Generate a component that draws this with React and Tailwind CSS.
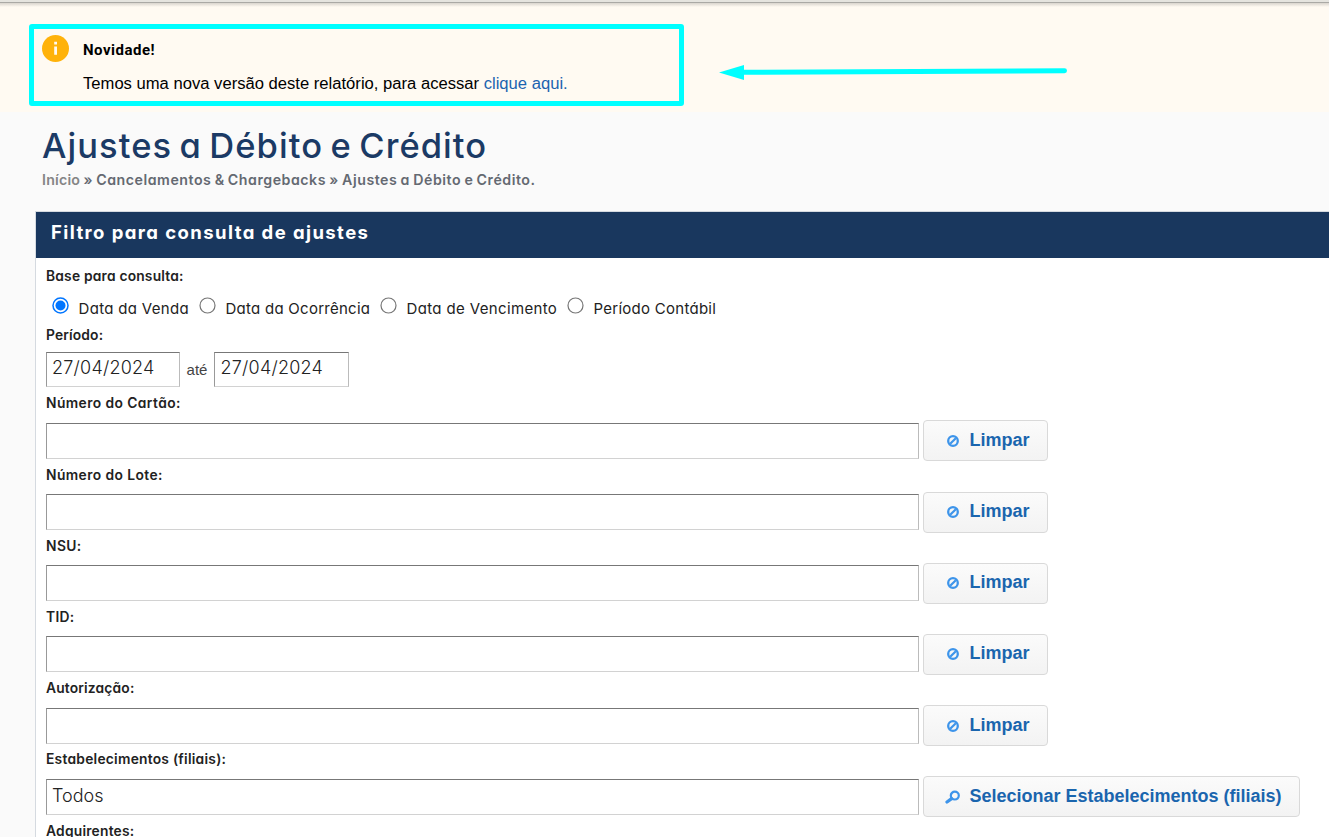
const geo = "font-['Inter'] [font-feature-settings:'cv11']";

const bases = [
  { label: 'Data da Venda', checked: true, box: 'w-[147px]', text: 'tracking-[0.32px]' },
  { label: 'Data da Ocorrência', box: 'w-[181px]', text: 'tracking-[0.26px]' },
  { label: 'Data de Vencimento', box: 'w-[187px]', text: 'tracking-[0.36px]' },
  { label: 'Período Contábil', box: 'w-[160px]', text: 'tracking-[0.27px]' },
];

const fields = [
  { label: 'Número do Cartão:', text: 'tracking-[0.42px]' },
  { label: 'Número do Lote:', text: 'tracking-[0.42px]' },
  { label: 'NSU:', text: 'tracking-[0.4px]' },
  { label: 'TID:', text: 'tracking-[0.3px]' },
  { label: 'Autorização:', text: 'tracking-[0.17px]' },
  { label: 'Estabelecimentos (filiais):', text: 'tracking-[0.25px]', value: 'Todos', search: true },
];

function ClearIcon() {
  return (
    <svg width="12" height="12" viewBox="0 0 12 12" fill="none" stroke="#3d94ea">
      <circle cx="6" cy="6" r="4.8" strokeWidth="2.3" />
      <path d="M3.2 8.8 8.8 3.2" strokeWidth="2.2" />
    </svg>
  );
}

function SearchIcon() {
  return (
    <svg width="15" height="14" viewBox="0 0 15 14" fill="none" stroke="#3d94ea">
      <ellipse cx="9.8" cy="5.6" rx="4" ry="3.9" strokeWidth="2.2" />
      <path d="M6.6 8.6 2 12" strokeWidth="3.2" strokeLinecap="round" />
    </svg>
  );
}

function Button({ search }) {
  return (
    <button
      className={`flex h-[41px] items-center rounded-[4px] border border-[#d9d9d9] bg-linear-to-b from-[#fbfbfb] to-[#f3f3f3] pb-px font-['Liberation_Sans',Arial,sans-serif] text-[18px] font-bold whitespace-nowrap text-[#1a65ae] ${
        search ? 'w-[377px] pl-[21px]' : 'w-[125px] pl-[23px]'
      }`}
    >
      <span className={`flex shrink-0 ${search ? 'w-[24.5px] pt-[2px]' : 'w-[22.5px] pt-px'}`}>
        {search ? <SearchIcon /> : <ClearIcon />}
      </span>
      {search ? 'Selecionar Estabelecimentos (filiais)' : 'Limpar'}
    </button>
  );
}

const inputBorder = 'border border-t-[#777] border-r-[#bbb] border-b-[#d2d2d2] border-l-[#999] bg-white outline-none';

function Label({ children, className = '' }) {
  return <div className={`text-[13.8px] leading-[22px] font-semibold text-[#222] ${className}`}>{children}</div>;
}

export default function App() {
  return (
    <div className={`h-[837px] w-full overflow-hidden bg-[#fafafa] ${geo}`}>
      <div className="relative h-[112px] bg-[#fffaf2]">
        <div className="h-[3px] border-b border-[#aaa9a5] bg-[#e5e4df]" />
        <div className="h-[4px] bg-linear-to-b from-[#d9d5ce] to-[#fffaf2]" />
        <div className="mt-[17px] ml-[29px] flex h-[82px] w-[655px] rounded-[3px] border-[5px] border-[#00ffff] pl-[8px]">
          <svg className="mt-[6px] shrink-0" width="27" height="27" viewBox="0 0 27 27">
            <circle cx="13.5" cy="13.5" r="13.5" fill="#ffb20a" />
            <path d="M12.2 6.8h2.8v2.7h-2.8zM12.2 11.6h2.8v8.2h-2.8z" fill="#fffaf2" />
          </svg>
          <div className="ml-[14px] whitespace-nowrap text-black">
            <div className="mt-[11px] font-['Roboto'] text-[15px] leading-[20px] font-bold tracking-[0.5px]">Novidade!</div>
            <div className="mt-[14px] font-['Liberation_Sans',Arial,sans-serif] text-[16.62px] leading-[20px]">
              Temos uma nova versão deste relatório, para acessar <a className="text-[#1c63b0]">clique aqui.</a>
            </div>
          </div>
        </div>
        <svg className="absolute top-[60px] left-[716px]" width="356" height="24" viewBox="0 0 356 24">
          <path d="M26 12.3 348.5 10.7" stroke="#00ffff" strokeWidth="5" strokeLinecap="round" />
          <path d="M3 12.4 28 5v15z" fill="#00ffff" />
        </svg>
      </div>

      <header className="h-[99px] pl-[42px] whitespace-nowrap">
        <h1 className="pt-[12px] text-[34.5px] leading-[44px] font-medium tracking-[1.05px] text-[#1b3a65] [word-spacing:-2.8px]">Ajustes a Débito e Crédito</h1>
        <p className="mt-[2px] text-[14.2px] leading-[20px] font-semibold tracking-[0.52px] text-[#646971] [word-spacing:-0.8px]">
          <span className="tracking-[0.2px] text-[#858585]">Início</span> » Cancelamentos &amp; Chargebacks » Ajustes a Débito e Crédito.
        </p>
      </header>

      <main className="ml-[35px] h-[640px] border-t border-l border-[#d5dae0] bg-white">
        <h2 className="h-[46px] bg-[#19375e] pt-[7px] pl-[15px] text-[18.5px] leading-[26px] font-bold tracking-[1.42px] whitespace-nowrap text-white">
          Filtro para consulta de ajustes
        </h2>
        <div className="pl-[10px] whitespace-nowrap">
          <Label className="mt-[7px] tracking-[0.2px]">Base para consulta:</Label>
          <div className="mt-[8px] flex h-[24px] pl-[6px]">
            {bases.map((b) => (
              <label key={b.label} className={`flex shrink-0 ${b.box}`}>
                <svg className="mt-[2px] mr-[9.5px] shrink-0" width="17" height="17" viewBox="0 0 17 17" fill="none">
                  <circle cx="8.5" cy="8.5" r="7.5" stroke={b.checked ? '#0075ff' : '#767676'} strokeWidth={b.checked ? 1.5 : 1.2} />
                  {b.checked && <circle cx="8.5" cy="8.5" r="5" fill="#0075ff" />}
                </svg>
                <span className={`pt-[3px] text-[15px] leading-[22px] text-[#222] ${b.text}`}>{b.label}</span>
              </label>
            ))}
          </div>
          <Label className="mt-[5px] tracking-[0.15px]">Período:</Label>
          <div className="mt-[6px] flex h-[36px] items-start">
            <input readOnly defaultValue="27/04/2024" className={`h-[35px] w-[134px] pb-[4px] pl-[5px] text-[18px] font-light tracking-[0.22px] text-[#222] ${geo} ${inputBorder}`} />
            <span className="w-[34px] pt-[7px] text-center font-['Liberation_Sans',Arial,sans-serif] text-[15px] leading-[22px] text-[#444]">até</span>
            <input readOnly defaultValue="27/04/2024" className={`h-[35px] w-[135px] pb-[4px] pl-[5.5px] text-[18px] font-light tracking-[0.22px] text-[#222] ${geo} ${inputBorder}`} />
          </div>
          <div className="mt-[4.4px]">
            {fields.map((f) => (
              <div key={f.label} className="h-[71.2px]">
                <Label className={f.text}>{f.label}</Label>
                <div className="mt-[6px] flex items-center gap-[4px]">
                  <input readOnly defaultValue={f.value} className={`h-[36px] w-[873px] pb-[2px] pl-[5px] text-[18px] font-light text-[#222] ${geo} ${inputBorder}`} />
                  <Button search={f.search} />
                </div>
              </div>
            ))}
            <Label className="tracking-[0.22px]">Adquirentes:</Label>
          </div>
        </div>
      </main>
    </div>
  );
}
